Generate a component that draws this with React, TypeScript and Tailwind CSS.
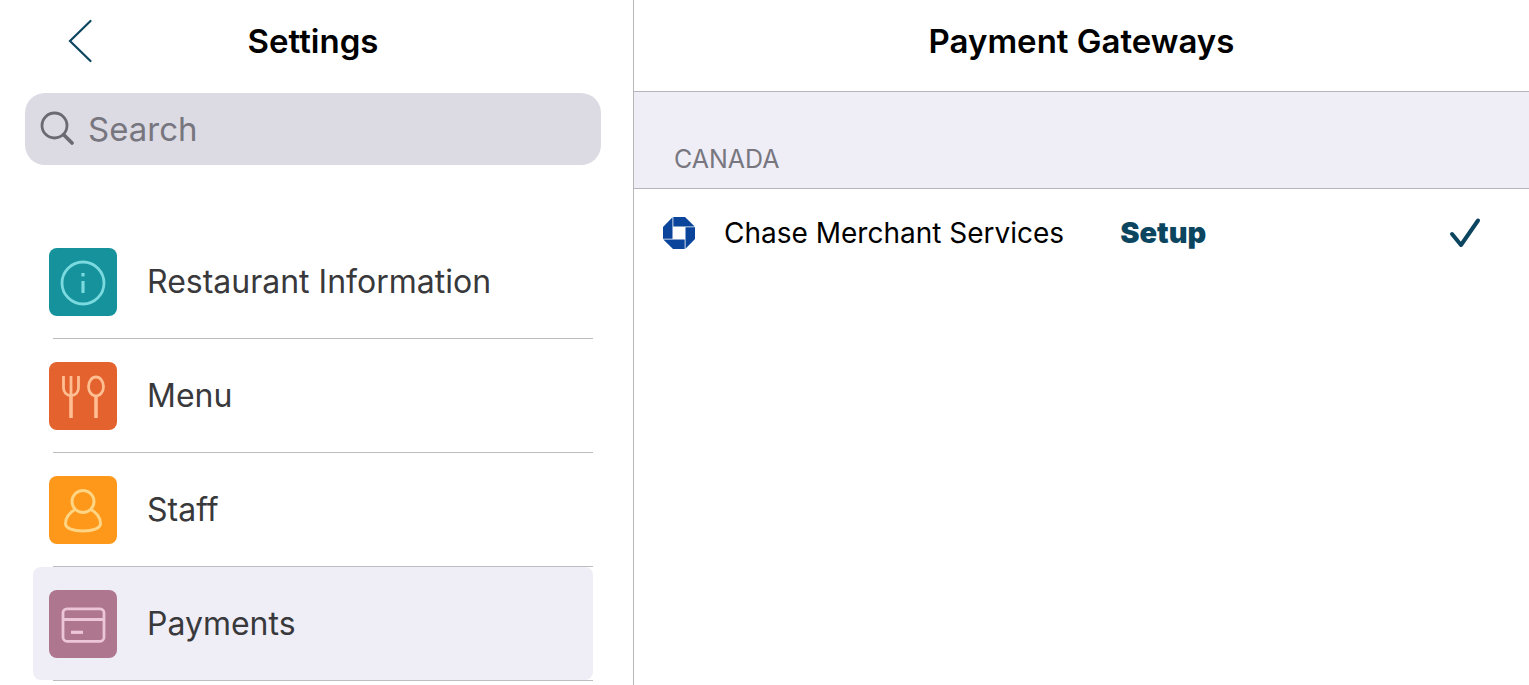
import type { ReactNode } from "react";

type Item = { label: string; tile: string; icon: ReactNode; selected?: boolean };

const InfoIcon = () => (
  <svg viewBox="0 0 68 68" className="size-full" fill="none" stroke="#7bdadf" strokeWidth="2.8" aria-hidden="true">
    <circle cx="34" cy="35" r="21" />
    <path d="M34 33v12" strokeWidth="3.2" />
    <path d="M34 25v3.4" strokeWidth="3.2" />
  </svg>
);

const MenuIcon = () => (
  <svg viewBox="0 0 68 68" className="size-full" fill="none" stroke="#ffbd92" strokeWidth="2.8" aria-hidden="true">
    <path d="M14.5 14v11.5c0 5 3 8 7.5 8s7.5-3 7.5-8V14M22 14v19.5" />
    <path d="M22 33v23M47 34v22" strokeWidth="3.6" />
    <ellipse cx="47" cy="24.5" rx="7.5" ry="9.5" />
  </svg>
);

const StaffIcon = () => (
  <svg viewBox="0 0 68 68" className="size-full" fill="none" stroke="#ffd482" strokeWidth="3" aria-hidden="true">
    <circle cx="34" cy="25.5" r="11" />
    <path d="M26 33.5C20 37 16.5 42 16.5 47.5c0 5 8 7.5 17.5 7.5s17.5-2.5 17.5-7.5C51.5 42 48 37 42 33.5" />
  </svg>
);

const CardIcon = () => (
  <svg viewBox="0 0 68 68" className="size-full" fill="none" stroke="#ecc6d8" strokeWidth="2.8" aria-hidden="true">
    <rect x="14" y="18.8" width="41" height="32.5" rx="4" />
    <path d="M14 29.5H55" />
    <path d="M22 42.3h12" strokeWidth="3.2" />
  </svg>
);

const items: Item[] = [
  { label: "Restaurant Information", tile: "bg-[#15929b]", icon: <InfoIcon /> },
  { label: "Menu", tile: "bg-[#e3622d]", icon: <MenuIcon /> },
  { label: "Staff", tile: "bg-[#fd981b]", icon: <StaffIcon /> },
  { label: "Payments", tile: "bg-[#ae768f]", icon: <CardIcon />, selected: true },
];

function SettingsPane() {
  return (
    <aside className="min-w-0 border-r border-[#b5b5ba]">
      <header className="grid h-[93px] grid-cols-[1fr_auto_1fr] items-center pb-3 pl-[67px]">
        <button type="button" aria-label="Back" className="w-fit">
          <svg viewBox="0 0 26 44" className="h-11 w-[26px]" fill="none" stroke="#0b4560" strokeWidth="2.2" strokeLinecap="round" aria-hidden="true">
            <path d="M23.5 2L3 22L23.5 42" />
          </svg>
        </button>
        <h1 className="-ml-[74px] text-[33px] leading-10 font-semibold text-black">Settings</h1>
      </header>
      <label className="mr-8 ml-[25px] flex h-[72px] items-center rounded-[20px] bg-[#dcdbe4] pl-[15px]">
        <svg viewBox="0 0 36 36" className="size-9 shrink-0" fill="none" stroke="#6b6a73" strokeLinecap="round" aria-hidden="true">
          <circle cx="14.5" cy="14.5" r="12.5" strokeWidth="2.8" />
          <path d="M24 24L32 32" strokeWidth="3.8" />
        </svg>
        <input
          type="search"
          aria-label="Search"
          placeholder="Search"
          className="ml-3 min-w-0 flex-1 bg-transparent text-[33px] leading-10 text-black outline-none placeholder:text-[#77767f]"
        />
      </label>
      <nav className="mt-[60px] mr-10 ml-[33px]">
        <ul>
          {items.map((item) => (
            <li key={item.label}>
              <a
                href="#"
                aria-current={item.selected ? "page" : undefined}
                className={
                  "flex h-[113px] items-center gap-[30px] rounded-lg px-4 text-[32px] leading-10 text-[#39393c] " +
                  (item.selected ? "bg-[#efeef7]" : "")
                }
              >
                <span className={"size-[68px] shrink-0 rounded-lg " + item.tile}>{item.icon}</span>
                {item.label}
              </a>
              <div className="ml-5 h-px bg-[#bcbcc1]" />
            </li>
          ))}
        </ul>
      </nav>
    </aside>
  );
}

function GatewaysPane() {
  return (
    <main className="min-w-0">
      <header className="flex h-[92px] items-center justify-center border-b border-[#b5b5bd] pb-[10px]">
        <h2 className="text-[33px] leading-10 font-semibold text-black">Payment Gateways</h2>
      </header>
      <section>
        <h3 className="flex h-[97px] items-end border-b border-[#b5b5bd] bg-[#efeef7] pb-[11px] pl-10 text-[25px] leading-9 text-[#78777f]">
          CANADA
        </h3>
        <div className="flex h-[88px] items-center pr-12 pl-[29px]">
          <svg viewBox="0 0 32 32" className="size-8 shrink-0" fill="#0b459b" aria-hidden="true">
            <path d="M10.3 0H22l9.7 9.5H10.3z" />
            <path d="M32 10.3V22l-9.5 9.7V10.3z" />
            <path d="M21.7 32H10L.3 22.5h21.4z" />
            <path d="M0 21.7V10L9.5 .3v21.4z" />
          </svg>
          <span className="ml-[29px] text-[28px] leading-9 whitespace-nowrap text-black">Chase Merchant Services</span>
          <button type="button" className="ml-14 text-[29px] leading-9 font-black text-[#0b4560]">
            Setup
          </button>
          <svg viewBox="0 0 32 32" className="ml-auto size-8 shrink-0" fill="none" stroke="#0b4560" strokeWidth="4" strokeLinecap="round" strokeLinejoin="round" role="img" aria-label="Selected">
            <path d="M3 17L12 28L29 3.5" />
          </svg>
        </div>
      </section>
    </main>
  );
}

export default function App() {
  return (
    <div className="grid min-h-screen grid-cols-[634fr_895fr] overflow-hidden bg-white font-['Inter',sans-serif]">
      <SettingsPane />
      <GatewaysPane />
    </div>
  );
}
